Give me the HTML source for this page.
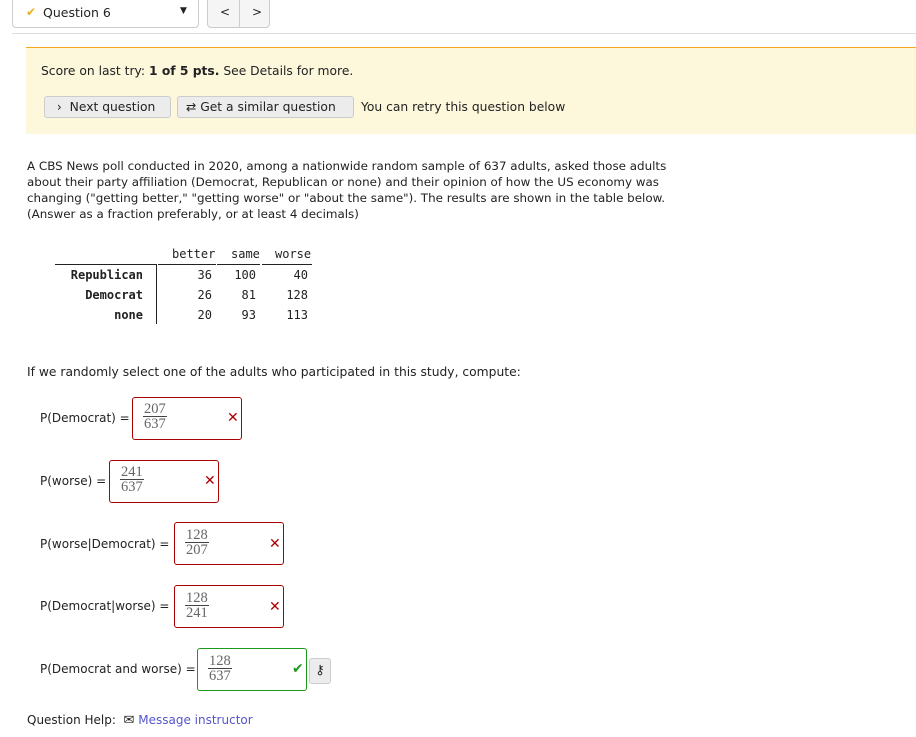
<!DOCTYPE html>
<html><head><meta charset="utf-8"><style>
body{margin:0;width:916px;height:737px;overflow:hidden;background:#fff;font-family:"DejaVu Sans","Liberation Sans",sans-serif;font-size:12px;color:#222;position:relative}
.a{position:absolute;white-space:nowrap}
.btn{position:absolute;background:#ececec;border:1px solid #ccc;border-radius:3px;height:22px;line-height:21px;box-sizing:border-box;padding:0 8px;white-space:nowrap;font-size:12.3px}
.mono{font-family:"DejaVu Sans Mono","Liberation Mono",monospace;font-size:12px}
.box{position:absolute;border:1px solid #a00;border-radius:3px;background:#fff;height:43px;box-sizing:border-box}
.frac{position:absolute;font-family:"Liberation Serif",serif;font-size:14.5px;color:#666;text-align:center;line-height:14px}
.frac span{display:block;padding:0 1px}
.frac .n{border-bottom:1px solid #444}
.x{position:absolute;color:#a00;font-weight:bold;font-size:14px}
</style></head><body>
<div style="position:absolute;left:12px;top:-4px;width:187px;height:32px;border:1px solid #ccc;border-radius:4px;box-sizing:border-box"></div>
<div class="a" style="left:26px;top:5px;color:#e8b020">✔</div>
<div class="a" style="left:43px;top:5px;font-size:12.5px">Question 6</div>
<div class="a" style="left:180px;top:6px;font-size:9px">▼</div>
<div style="position:absolute;left:207px;top:-4px;width:63px;height:32px;border:1px solid #ccc;border-radius:4px;background:#f5f5f5;box-sizing:border-box"></div>
<div style="position:absolute;left:239px;top:-4px;width:1px;height:32px;background:#ccc"></div>
<div class="a" style="left:220px;top:5px">&lt;</div>
<div class="a" style="left:252px;top:5px">&gt;</div>
<div style="position:absolute;left:12px;top:33px;width:904px;height:1px;background:#ddd"></div>
<div style="position:absolute;left:26px;top:47px;width:890px;height:86px;background:#fdf7dc;border-top:1px solid #f5a623"></div>
<div class="a" style="left:41px;top:64px;font-size:12.3px">Score on last try: <b>1 of 5 pts.</b> See Details for more.</div>
<div class="btn" style="left:44px;top:96px;width:127px">&nbsp;› &nbsp;Next question</div>
<div class="btn" style="left:177px;top:96px;width:177px">⇄ Get a similar question</div>
<div class="a" style="left:361px;top:100px;font-size:12.3px">You can retry this question below</div>
<div class="a" style="left:27px;top:158px;line-height:16px;white-space:normal;width:655px;font-size:11.9px">A CBS News poll conducted in 2020, among a nationwide random sample of 637 adults, asked those adults about their party affiliation (Democrat, Republican or none) and their opinion of how the US economy was changing ("getting better," "getting worse" or "about the same"). The results are shown in the table below. (Answer as a fraction preferably, or at least 4 decimals)</div>
<div class="a mono" style="left:172px;top:247px">better</div>
<div class="a mono" style="left:231px;top:247px">same</div>
<div class="a mono" style="left:275px;top:247px">worse</div>
<div style="position:absolute;left:55px;top:264px;width:102px;height:1px;background:#222"></div>
<div style="position:absolute;left:158px;top:264px;width:58px;height:1px;background:#222"></div>
<div style="position:absolute;left:217px;top:264px;width:43px;height:1px;background:#222"></div>
<div style="position:absolute;left:262px;top:264px;width:50px;height:1px;background:#222"></div>
<div style="position:absolute;left:156px;top:265px;width:1px;height:59px;background:#222"></div>
<div class="a mono" style="left:55px;top:265px;width:88px;text-align:right;font-weight:bold;line-height:20px">Republican<br>Democrat<br>none</div>
<div class="a mono" style="left:170px;top:265px;width:42px;text-align:right;line-height:20px">36<br>26<br>20</div>
<div class="a mono" style="left:220px;top:265px;width:36px;text-align:right;line-height:20px">100<br>81<br>93</div>
<div class="a mono" style="left:270px;top:265px;width:38px;text-align:right;line-height:20px">40<br>128<br>113</div>
<div class="a" style="left:27px;top:365px;font-size:12.3px">If we randomly select one of the adults who participated in this study, compute:</div>

<div class="a" style="left:40px;top:411px">P(Democrat) =</div>
<div class="box" style="left:132px;top:397px;width:110px"></div>
<div class="frac" style="left:143px;top:402px"><span class="n">207</span><span>637</span></div>
<div class="x" style="left:227px;top:410px">✕</div>

<div class="a" style="left:40px;top:474px">P(worse) =</div>
<div class="box" style="left:109px;top:460px;width:110px"></div>
<div class="frac" style="left:120px;top:465px"><span class="n">241</span><span>637</span></div>
<div class="x" style="left:204px;top:473px">✕</div>

<div class="a" style="left:40px;top:537px">P(worse|Democrat) =</div>
<div class="box" style="left:174px;top:522px;width:110px"></div>
<div class="frac" style="left:185px;top:528px"><span class="n">128</span><span>207</span></div>
<div class="x" style="left:269px;top:536px">✕</div>

<div class="a" style="left:40px;top:599px">P(Democrat|worse) =</div>
<div class="box" style="left:174px;top:585px;width:110px"></div>
<div class="frac" style="left:185px;top:591px"><span class="n">128</span><span>241</span></div>
<div class="x" style="left:269px;top:599px">✕</div>

<div class="a" style="left:40px;top:662px">P(Democrat and worse) =</div>
<div class="box" style="left:197px;top:648px;width:110px;border-color:#1a9a1a"></div>
<div class="frac" style="left:208px;top:654px"><span class="n">128</span><span>637</span></div>
<div class="a" style="left:292px;top:661px;color:#1a9a1a;font-weight:bold;font-size:14px">✔</div>
<div style="position:absolute;left:309px;top:658px;width:22px;height:26px;background:#ececec;border:1px solid #ccc;border-radius:3px;box-sizing:border-box;font-size:13px;text-align:center;line-height:24px">⚷</div>
<div class="a" style="left:27px;top:713px">Question Help: &nbsp;<span style="font-size:13px">✉</span> <span style="color:#5555cc">Message instructor</span></div>
</body></html>
